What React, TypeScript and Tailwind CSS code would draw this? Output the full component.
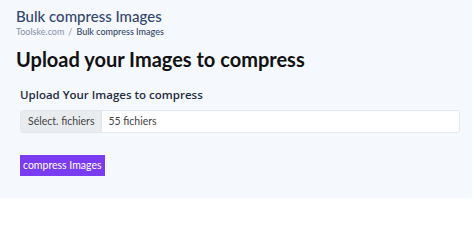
export default function App() {
  return (
    <div className="w-[474px] h-[202px] bg-white overflow-hidden">
      <div className="w-[472px] h-[198px] bg-[#f5f8fd] pt-[7px] px-4 font-['Lato',sans-serif]">
        <h2 className="text-[15px] leading-[19px] text-[#34476a] font-medium">Bulk compress Images</h2>
        <nav className="flex items-center gap-1 text-[9px] leading-[12px]">
          <span className="text-[#8392ab]">Toolske.com</span>
          <span className="text-[#8392ab]">/</span>
          <span className="text-[#344767] font-medium">Bulk compress Images</span>
        </nav>
        <h1 className="mt-[9px] text-[20px] leading-[25px] font-bold text-[#111]">Upload your Images to compress</h1>
        <div className="mt-[15px] px-1">
          <label className="block text-[11.5px] leading-[15px] font-semibold text-[#1f2d3d] font-['Open_Sans',sans-serif]">
            Upload Your Images to compress
          </label>
          <div className="mt-[8px] flex h-[23px] w-[440px] rounded-[3px] border border-[#e3e7ed] overflow-hidden bg-white text-[10.5px] text-[#444]">
            <span className="flex items-center px-[7px] bg-[#e9ecef] border-r border-[#e3e7ed]">Sélect. fichiers</span>
            <span className="flex items-center px-[6px]">55 fichiers</span>
          </div>
          <button className="mt-[22px] h-[21px] px-[3px] bg-[#7a3cf0] text-white text-[10.5px] leading-[21px]">compress Images</button>
        </div>
      </div>
    </div>
  );
}
